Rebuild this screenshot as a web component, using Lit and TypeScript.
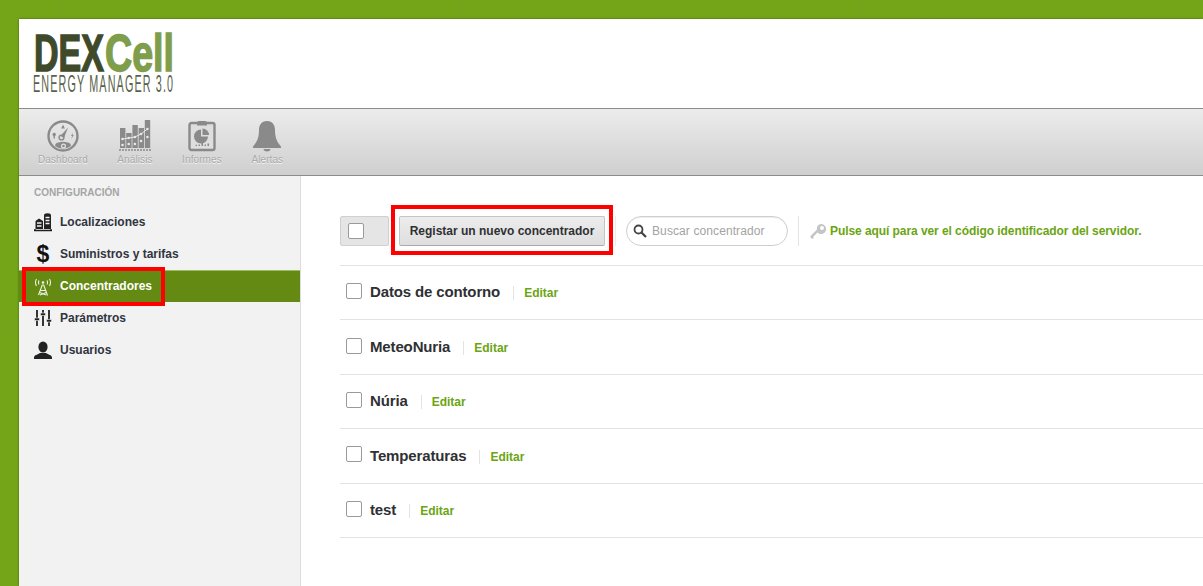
import { LitElement, html, css, svg } from 'lit';
import { customElement, state } from 'lit/decorators.js';

type NavItem = { label: string; icon: unknown };
type MenuItem = { label: string; icon: unknown; active?: boolean };

const gauge = svg`
  <circle cx="16" cy="16" r="14.5" fill="none" stroke="#8a8a8a" stroke-width="2.4"/>
  <path d="M8 26a4 4 0 0 1 3.500-3.500 9 6 0 0 1 9 0A4 4 0 0 1 24 26a14 14 0 0 1-16 0z" fill="#8a8a8a"/>
  <circle cx="16.500" cy="26" r="1.900" fill="none" stroke="#e4e4e4" stroke-width="1.200"/>
  <path d="M13.500 16l7.500-8.500-4 10.500z" fill="#8a8a8a"/>
  <circle cx="14.500" cy="17.500" r="2.400" fill="none" stroke="#8a8a8a" stroke-width="1.400"/>
  <path d="M16 4.500l1.800 4h-3.600zM5.500 14.500a1.700 1.700 0 1 1 3.400 0 1.700 1.700 0 0 1-3.400 0zM6.500 16h1.400v2.500H6.500zM26 12.500l-2 3.500h1.300l-1.300 3.500 2.800-4.500h-1.400z" fill="#8a8a8a"/>`;

const bars = svg`
  <g fill="#8a8a8a">
    <rect x="1" y="8" width="5.400" height="20"/><rect x="7.200" y="13" width="5.400" height="15"/>
    <rect x="13.400" y="5" width="5.400" height="23"/><rect x="19.600" y="8" width="5.400" height="20"/>
    <rect x="25.800" y="0" width="5.400" height="28"/>
  </g>
  <path d="M3.500 19l6.200-1 6.200-1 6.200-3 6.200-5" fill="none" stroke="#e8e8e8" stroke-width="1"/>
  <g fill="#e8e8e8">
    <circle cx="3.500" cy="19" r="1.300"/><circle cx="9.700" cy="18" r="1.300"/><circle cx="15.900" cy="17" r="1.300"/>
    <circle cx="22" cy="14" r="1.300"/><circle cx="28.400" cy="9" r="1.300"/><circle cx="3.500" cy="25" r="1.300"/>
    <circle cx="9.700" cy="24" r="1.300"/><circle cx="15.900" cy="24" r="1.300"/><circle cx="22" cy="21" r="1.300"/><circle cx="28.400" cy="17" r="1.300"/>
  </g>
  <path d="M0 30h32" stroke="#8a8a8a" stroke-width="1.600" stroke-dasharray="2 1"/>`;

const report = svg`
  <rect x="3.500" y="3" width="25" height="27" rx="2" fill="#dedede" stroke="#8a8a8a" stroke-width="2.400"/>
  <path d="M11 3.500a2 2 0 0 1 2-2.500h6a2 2 0 0 1 2 2.500v2H11z" fill="#8a8a8a"/>
  <path d="M15 9.500a7 7 0 1 0 7 7h-7z" fill="#8a8a8a"/>
  <path d="M16.500 8.500v6.500h6.500a6.500 6.500 0 0 0-6.500-6.500z" fill="#8a8a8a"/>
  <path d="M9.500 26h1.500v-1.200H9.500zM12.500 26H14v-1.600h-1.500zM15.500 26H17v-3h-1.500zM18.500 26H20v-1.600h-1.500zM21.500 26H23v-2.500h-1.500z" fill="#8a8a8a"/>`;

const bell = svg`
  <path d="M16 1c5.500 0 8 4 8 9 0 8 2 12 6 16.500 .4.600 0 1.500-1 1.500H3c-1 0-1.400-.9-1-1.500C6 22 8 18 8 10c0-5 2.500-9 8-9z" fill="#8a8a8a"/>
  <path d="M12.500 29h7c0 1.500-1.500 2.500-3.500 2.500s-3.500-1-3.500-2.500z" fill="#8a8a8a"/>`;

const buildings = svg`
  <path d="M10 2.500a3.500 2.200 0 0 1 7 0V16h-7zM1.500 8l3.500-2.500L9 8v8H1.500z" fill="#222"/>
  <path d="M11.500 4.500h4M11.500 7.500h4M11.500 10.500h4M3 10h4.500M3 13h4.500" stroke="#f2f2f2" stroke-width="1.300"/>
  <path d="M0 17.500h18M1 16v2M17 16v2" stroke="#222" stroke-width="1.400"/>`;

const tower = svg`
  <g fill="none" stroke="#eef3e2" stroke-width="1.100">
    <path d="M8.500 7.500L4.500 18M9.500 7.500l4 11M6.300 13.500h5.400M5.600 15.500l6.500 2.500M12.400 15.500l-6.500 2.500"/>
    <path d="M2.500 2q-2 3.500 0 7M5 3.500q-1 2 0 4M15.500 2q2 3.500 0 7M13 3.500q1 2 0 4"/>
  </g>
  <circle cx="9" cy="5.500" r="1.300" fill="#eef3e2"/>`;

const sliders = svg`
  <path d="M3 1v16M9 1v16M15 1v16" stroke="#222" stroke-width="1.800"/>
  <path d="M.5 9h5v2.500h-5zM6.500 4h5v2.500h-5zM12.500 10.500h5V13h-5z" fill="#222" stroke="#f2f2f2" stroke-width=".6"/>`;

const user = svg`
  <ellipse cx="9" cy="6" rx="4.600" ry="5.600" fill="#222"/>
  <path d="M0 18v-1.500c0-2.500 4-3 6-4.500h6c2 1.500 6 2 6 4.500V18z" fill="#222"/>`;

@customElement('app-root')
export class AppRoot extends LitElement {
  @state()
  private nav: NavItem[] = [
    { label: 'Dashboard', icon: gauge },
    { label: 'Análisis', icon: bars },
    { label: 'Informes', icon: report },
    { label: 'Alertas', icon: bell },
  ];

  @state()
  private menu: MenuItem[] = [
    { label: 'Localizaciones', icon: buildings },
    { label: 'Suministros y tarifas', icon: null },
    { label: 'Concentradores', icon: tower, active: true },
    { label: 'Parámetros', icon: sliders },
    { label: 'Usuarios', icon: user },
  ];

  @state()
  private rows = ['Datos de contorno', 'MeteoNuria', 'Núria', 'Temperaturas', 'test'];

  static styles = css`
    :host {
      display: block;
      font-family: 'Liberation Sans', Arial, sans-serif;
    }
    .page {
      height: 586px;
      box-sizing: border-box;
      padding: 19px 0 0 19px;
      overflow: hidden;
      background-color: #72a51f;
      background-image: url("data:image/svg+xml,%3Csvg xmlns='http://www.w3.org/2000/svg' width='200' height='200'%3E%3Cfilter id='n'%3E%3CfeTurbulence type='fractalNoise' baseFrequency='.8' numOctaves='2' stitchTiles='stitch'/%3E%3CfeColorMatrix values='0 0 0 0 .2 0 0 0 0 .38 0 0 0 0 0 0 0 0 1.600 -.62'/%3E%3C/filter%3E%3Crect width='200' height='200' filter='url(%23n)'/%3E%3C/svg%3E");
    }
    .shell {
      height: 567px;
      display: flex;
      flex-direction: column;
      background: #fff;
      box-shadow: 0 0 2px rgba(40, 70, 0, 0.7);
    }
    .logo {
      height: 89px;
      flex: none;
      background: #fff;
    }
    .logo svg {
      display: block;
    }
    .toolbar {
      height: 66px;
      flex: none;
      display: flex;
      gap: 29.5px;
      padding-left: 19px;
      border-top: 1px solid #8c8c8c;
      border-bottom: 1px solid #8c8c8c;
      background: linear-gradient(#ececec, #cfcfcf);
    }
    .tool {
      display: flex;
      flex-direction: column;
      align-items: center;
      padding-top: 11px;
      font-size: 10px;
      letter-spacing: 0.1px;
      color: #a9a9a9;
      text-shadow: 0 1px 0 #f4f4f4;
    }
    .tool svg {
      display: block;
      margin-bottom: 2px;
    }
    .tool span {
      line-height: 12px;
    }
    .body {
      flex: 1;
      display: flex;
      min-height: 0;
    }
    .side {
      width: 281px;
      flex: none;
      background: #f2f2f2;
      border-right: 1px solid #dcdcdc;
    }
    .side h4 {
      margin: 0;
      padding: 11px 0 0 15px;
      height: 19px;
      font-size: 10px;
      line-height: 12px;
      font-weight: bold;
      color: #a5a5a5;
    }
    .menu-item {
      position: relative;
      height: 32px;
      display: flex;
      align-items: center;
      font-size: 12px;
      font-weight: bold;
      color: #2f3540;
    }
    .menu-item.active {
      background: #648a14;
      color: #fff;
      box-shadow: inset 0 1px 0 #9dbb62;
    }
    .menu-icon {
      width: 26px;
      padding-left: 15px;
      flex: none;
      display: flex;
      align-items: center;
    }
    .menu-icon svg {
      display: block;
    }
    .dollar {
      width: 18px;
      text-align: center;
      font-size: 23px;
      line-height: 22px;
      color: #111;
    }
    .mark {
      position: absolute;
      border: 4px solid #ff0000;
      box-sizing: border-box;
      pointer-events: none;
    }
    .menu-item .mark {
      left: 3px;
      top: -3px;
      width: 143px;
      height: 39px;
    }
    .main {
      flex: 1;
      padding: 40px 0 0 39px;
      min-width: 0;
    }
    .actions {
      height: 30px;
      padding-bottom: 19px;
      display: flex;
      align-items: center;
      border-bottom: 1px solid #e3e3e3;
    }
    .select-all {
      width: 49px;
      height: 30px;
      box-sizing: border-box;
      flex: none;
      display: flex;
      align-items: center;
      padding-left: 7px;
      background: #e5e5e5;
      border: 1px solid #d0d0d0;
      border-radius: 2px;
      margin-right: 10px;
    }
    .check {
      width: 16px;
      height: 16px;
      box-sizing: border-box;
      flex: none;
      background: #fff;
      border: 1px solid #9a9a9a;
      border-radius: 2px;
    }
    .register {
      position: relative;
      flex: none;
      margin-right: 10px;
      padding-right: 10px;
      border-right: 1px solid #ececec;
      height: 30px;
    }
    .register button {
      width: 206px;
      height: 30px;
      padding: 0;
      background: linear-gradient(#ececec, #dedede);
      border: 1px solid #c4c4c4;
      border-bottom-color: #a9a9a9;
      border-radius: 2px;
      font: bold 12px 'Liberation Sans', Arial, sans-serif;
      color: #2f3033;
    }
    .register .mark {
      left: -8px;
      top: -11px;
      width: 222px;
      height: 50px;
    }
    .search {
      width: 162px;
      height: 30px;
      box-sizing: border-box;
      flex: none;
      display: flex;
      align-items: center;
      gap: 5px;
      padding-left: 6px;
      border: 1px solid #cfcfcf;
      border-radius: 15px;
      box-shadow: inset 0 1px 1px #eee;
      font-size: 12px;
      letter-spacing: 0.1px;
      color: #a3a3a3;
      margin-right: 10px;
    }
    .server {
      height: 30px;
      flex: none;
      display: flex;
      align-items: center;
      gap: 3px;
      padding-left: 11px;
      border-left: 1px solid #e3e3e3;
      font-size: 12px;
      letter-spacing: -0.07px;
      font-weight: bold;
      color: #6aa512;
    }
    .server svg {
      display: block;
    }
    .row {
      height: 54.4px;
      box-sizing: border-box;
      display: flex;
      align-items: center;
      padding-left: 6px;
      border-bottom: 1px solid #e3e3e3;
    }
    .row .check {
      margin-bottom: 3px;
    }
    .row .name {
      margin-left: 8px;
      margin-top: -1.6px;
      font-size: 15px;
      letter-spacing: -0.14px;
      font-weight: bold;
      color: #2f3033;
    }
    .row .edit {
      margin-left: 13px;
      margin-top: 1.4px;
      padding-left: 10px;
      border-left: 1px solid #e3e3e3;
      font-size: 12px;
      line-height: 14px;
      font-weight: bold;
      color: #6aa512;
    }
  `;

  render() {
    return html`
      <div class="page">
        <div class="shell">
          <header class="logo">${this.renderLogo()}</header>
          <nav class="toolbar">
            ${this.nav.map(
              item => html`
                <div class="tool">
                  <svg width="32" height="32" viewBox="0 0 32 32">${item.icon}</svg>
                  <span>${item.label}</span>
                </div>
              `
            )}
          </nav>
          <div class="body">
            <aside class="side">
              <h4>CONFIGURACIÓN</h4>
              ${this.menu.map(
                item => html`
                  <div class="menu-item ${item.active ? 'active' : ''}">
                    <div class="menu-icon">
                      ${item.icon
                        ? html`<svg width="18" height="19" viewBox="0 0 18 19">${item.icon}</svg>`
                        : html`<span class="dollar">$</span>`}
                    </div>
                    ${item.label}
                    ${item.active ? html`<div class="mark"></div>` : ''}
                  </div>
                `
              )}
            </aside>
            <main class="main">
              <div class="actions">
                <div class="select-all"><div class="check"></div></div>
                <div class="register">
                  <button>Registar un nuevo concentrador</button>
                  <div class="mark"></div>
                </div>
                <div class="search">
                  <svg width="14" height="14" viewBox="0 0 14 14">
                    <circle cx="5.500" cy="5.500" r="4" fill="none" stroke="#444" stroke-width="1.800"/>
                    <path d="M8.500 8.500l4.500 4.500" stroke="#444" stroke-width="2.200"/>
                  </svg>
                  Buscar concentrador
                </div>
                <div class="server">
                  <svg width="17" height="17" viewBox="0 0 17 17">
                    <path d="M11 1a5 5 0 1 1-3.500 8.500L3.500 13.500v2h-2l-1-1v-1.500L7 6.500A5 5 0 0 1 11 1zm1 2a2 2 0 1 0 0 4 2 2 0 0 0 0-4z" fill="#c4c4c4" fill-rule="evenodd"/>
                  </svg>
                  Pulse aquí para ver el código identificador del servidor.
                </div>
              </div>
              ${this.rows.map(
                name => html`
                  <div class="row">
                    <div class="check"></div>
                    <span class="name">${name}</span>
                    <span class="edit">Editar</span>
                  </div>
                `
              )}
            </main>
          </div>
        </div>
      </div>
    `;
  }

  private renderLogo() {
    return html`
      <svg width="300" height="89" viewBox="0 0 300 89">
        <g font-family="Liberation Sans, Arial, sans-serif" font-weight="bold" font-size="52" stroke-width="1.500">
          <text x="15" y="52" fill="#3f4a2b" stroke="#3f4a2b" textLength="70" lengthAdjust="spacingAndGlyphs">DEX</text>
          <text x="86" y="52" fill="#7f9e4c" stroke="#7f9e4c" textLength="69" lengthAdjust="spacingAndGlyphs">Cell</text>
        </g>
        <text transform="translate(14 73) scale(.45 1)" fill="#59624a" font-family="Liberation Sans, Arial, sans-serif"
          font-size="24" letter-spacing="2.500">ENERGY MANAGER 3.0</text>
      </svg>
    `;
  }
}

declare global {
  interface HTMLElementTagNameMap {
    'app-root': AppRoot;
  }
}
